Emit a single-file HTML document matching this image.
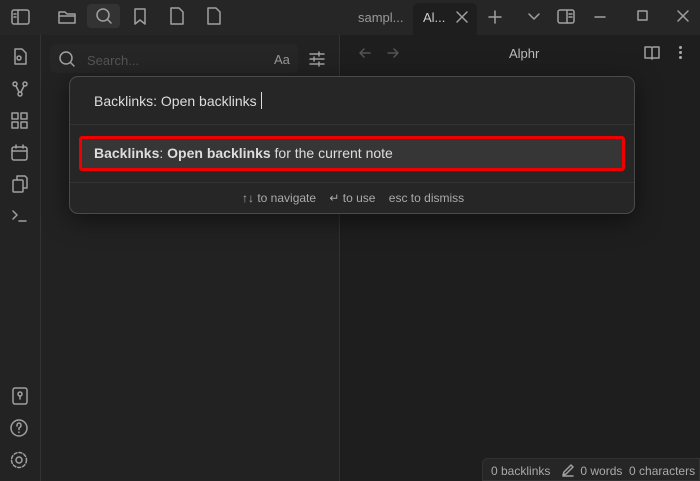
<!DOCTYPE html>
<html><head><style>
*{margin:0;padding:0;box-sizing:border-box}
body{width:700px;height:481px;background:#1c1c1c;font-family:"Liberation Sans",sans-serif;position:relative;overflow:hidden;color:#ddd}
.abs{position:absolute}
svg{position:absolute;fill:none;stroke:#a0a0a0;stroke-width:1.5;stroke-linecap:round;stroke-linejoin:round}
</style></head><body>
<div class="abs" style="left:0;top:0;width:700px;height:35px;background:#262626"></div>
<div class="abs" style="left:0;top:35px;width:41px;height:446px;background:#232323;border-right:1px solid #333"></div>
<div class="abs" style="left:41px;top:35px;width:299px;height:446px;background:#222;border-right:1px solid #333"></div>
<div class="abs" style="left:341px;top:35px;width:359px;height:446px;background:#1e1e1e"></div>
<div class="abs" style="left:87px;top:4px;width:33px;height:24px;background:#333;border-radius:4px"></div>
<div class="abs" style="left:413px;top:3px;width:64px;height:32px;background:#1e1e1e;border-radius:6px 6px 0 0"></div>
<div class="abs" style="left:358px;top:10px;font-size:13px;color:#999">sampl...</div>
<div class="abs" style="left:423px;top:10px;font-size:13px;color:#ccc">Al...</div>
<svg style="left:455px;top:10px" width="14" height="14"><path d="M2 2L12 12M12 2L2 12"/></svg>
<svg style="left:487px;top:9px" width="16" height="16"><path d="M8 2V14M2 8H14"/></svg>
<svg style="left:527px;top:11px" width="14" height="10"><path d="M2 3L7 8L12 3"/></svg>
<svg style="left:556px;top:8px" width="20" height="18"><rect x="2" y="2" width="16" height="13" rx="2"/><path d="M11 2V15M13 6H16M13 9H16"/></svg>
<svg style="left:593px;top:10px" width="14" height="14"><path d="M2 7H12"/></svg>
<svg style="left:636px;top:9px" width="14" height="14"><rect x="2" y="2" width="9" height="9"/></svg>
<svg style="left:676px;top:9px" width="14" height="14"><path d="M2 2L12 12M12 2L2 12"/></svg>
<svg style="left:10px;top:7px" width="22" height="20"><rect x="2" y="3" width="17" height="14" rx="2"/><path d="M8 3V17M4 7H6M4 10H6"/></svg>
<svg style="left:57px;top:7px" width="20" height="20"><path d="M2 5H8L10 7H18V16H2Z M2 9H18"/></svg>
<svg style="left:94px;top:6px" width="20" height="20"><circle cx="9" cy="9" r="6"/><path d="M13.5 13.5L17 17"/></svg>
<svg style="left:132px;top:7px" width="16" height="20"><path d="M3 2H13V17L8 13L3 17Z"/></svg>
<svg style="left:168px;top:6px" width="18" height="20"><path d="M3 2H11L15 6V18H3Z"/></svg>
<svg style="left:205px;top:6px" width="18" height="20"><path d="M3 2H11L15 6V18H3Z"/></svg>
<svg style="left:10px;top:47px" width="20" height="20"><path d="M5 2H12L16 6V17H5Z"/><circle cx="9" cy="11" r="2"/></svg>
<svg style="left:10px;top:79px" width="20" height="20"><circle cx="5" cy="5" r="2"/><circle cx="15" cy="5" r="2"/><circle cx="10" cy="15" r="2"/><path d="M6 7L9 13M14 7L11 13"/></svg>
<svg style="left:10px;top:111px" width="20" height="20"><rect x="2" y="2" width="6" height="6"/><rect x="11" y="2" width="6" height="6"/><rect x="2" y="11" width="6" height="6"/><rect x="11" y="11" width="6" height="6"/></svg>
<svg style="left:10px;top:143px" width="20" height="20"><rect x="2" y="4" width="15" height="13" rx="2"/><path d="M2 8H17M6 2V5M13 2V5"/></svg>
<svg style="left:10px;top:174px" width="20" height="20"><rect x="3" y="6" width="10" height="12" rx="1"/><path d="M7 6V2H15L17 4V14H13"/></svg>
<svg style="left:10px;top:206px" width="20" height="20"><path d="M3 5L7 9L3 13M9 15H16"/></svg>
<svg style="left:10px;top:386px" width="20" height="20"><rect x="3" y="2" width="14" height="16" rx="2"/><circle cx="10" cy="8" r="2"/><path d="M10 10V13"/></svg>
<svg style="left:9px;top:418px" width="20" height="20"><circle cx="10" cy="10" r="8"/><path d="M8 8Q8 5 10 5Q12 5 12 7.5Q12 9 10 10V11.5M10 14V14.5"/></svg>
<svg style="left:9px;top:450px" width="20" height="20"><circle cx="10" cy="10" r="3"/><circle cx="10" cy="10" r="7.5" stroke-dasharray="3 2"/></svg>
<div class="abs" style="left:50px;top:44px;width:248px;height:29px;background:#262626;border-radius:5px"></div>
<svg style="left:57px;top:49px" width="20" height="20"><circle cx="9" cy="9" r="6"/><path d="M13.5 13.5L17 17"/></svg>
<div class="abs" style="left:87px;top:53px;font-size:13px;color:#555">Search...</div>
<div class="abs" style="left:274px;top:52px;font-size:13px;color:#999">Aa</div>
<svg style="left:307px;top:49px" width="20" height="20"><path d="M3 5H17M3 10H17M3 15H17M12 3V7M7 8V12M12 13V17"/></svg>
<svg style="left:358px;top:46px" width="14" height="14"><path d="M12 7H2M6 3L2 7L6 11" stroke="#555"/></svg>
<svg style="left:386px;top:46px" width="14" height="14"><path d="M2 7H12M8 3L12 7L8 11" stroke="#555"/></svg>
<div class="abs" style="left:509px;top:46px;font-size:13px;color:#bbb">Alphr</div>
<svg style="left:643px;top:45px" width="18" height="16"><path d="M2 2H8L9 3L10 2H16V13H10L9 14L8 13H2ZM9 3V14"/></svg>
<div class="abs" style="left:679px;top:46px;width:3px;height:3px;background:#aaa;border-radius:50%;box-shadow:0 5px #aaa,0 10px #aaa"></div>
<div class="abs" style="left:482px;top:458px;width:218px;height:23px;background:#262626;border:1px solid #333;border-radius:6px 0 0 0"></div>
<div class="abs" style="left:491px;top:464px;font-size:12px;color:#aaa;white-space:nowrap">0 backlinks &nbsp;&nbsp;&nbsp;&nbsp;&nbsp;&nbsp;&nbsp;&nbsp;0 words &nbsp;0 characters</div>
<svg style="left:560px;top:462px" width="16" height="16"><path d="M3 13L4 10L11 3L13 5L6 12ZM3 14H13"/></svg>
<div class="abs" style="left:69px;top:76px;width:566px;height:138px;background:#262626;border:1px solid #4a4a4a;border-radius:9px;box-shadow:0 6px 25px rgba(0,0,0,.5)"></div>
<div class="abs" style="left:94px;top:92px;font-size:14px;color:#ddd">Backlinks: Open backlinks<span style="display:inline-block;width:1px;height:17px;background:#ddd;margin-left:4px;vertical-align:-3px"></span></div>
<div class="abs" style="left:70px;top:124px;width:564px;height:1px;background:#333"></div>
<div class="abs" style="left:79px;top:136px;width:546px;height:35px;background:#363636;border:3px solid #e00;border-radius:3px"></div>
<div class="abs" style="left:94px;top:145px;font-size:14px;color:#ddd"><b>Backlinks</b>: <b>Open backlinks</b> for the current note</div>
<div class="abs" style="left:70px;top:182px;width:564px;height:1px;background:#333"></div>
<div class="abs" style="left:242px;top:191px;font-size:12px;color:#aaa;white-space:nowrap">↑↓ to navigate &nbsp;&nbsp;&nbsp;↵ to use &nbsp;&nbsp;&nbsp;esc to dismiss</div>
</body></html>
